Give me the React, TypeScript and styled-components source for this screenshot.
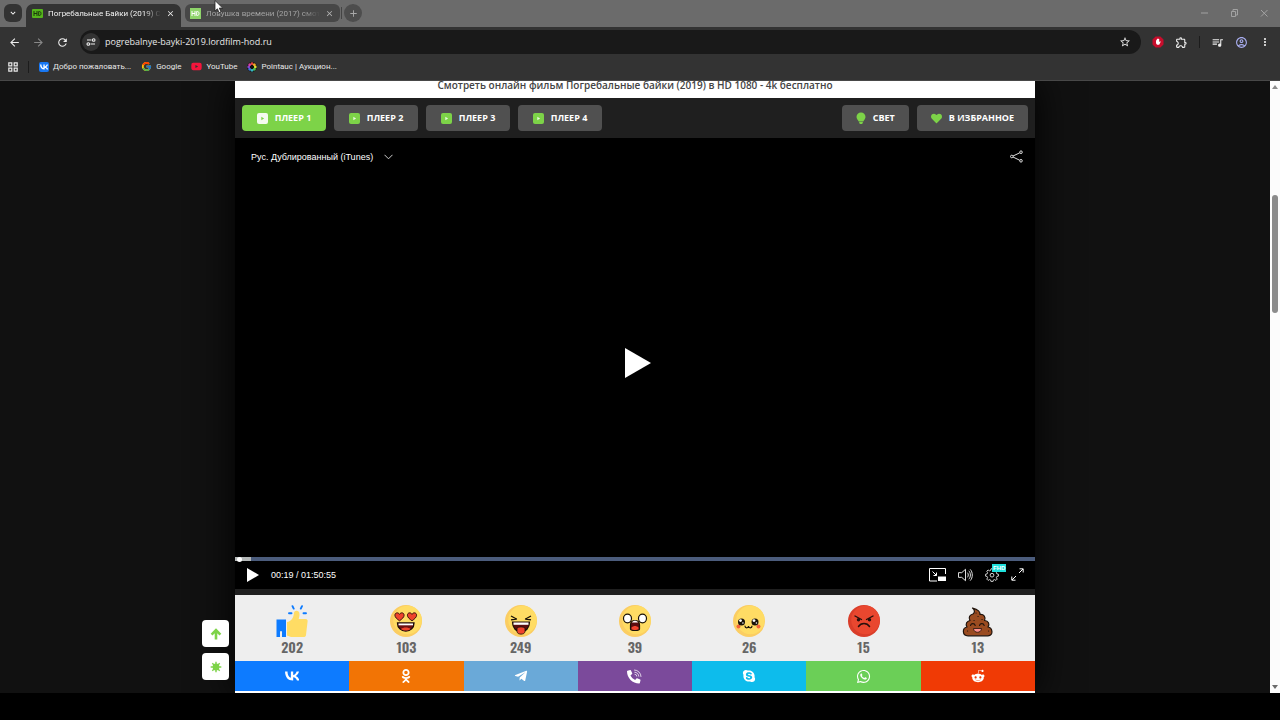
import React from "react";
import styled, { createGlobalStyle, css } from "styled-components";
import {
  MdArrowBack, MdArrowForward, MdRefresh, MdStarBorder, MdOutlineExtension, MdOutlineQueueMusic,
  MdMoreVert, MdClose, MdAdd, MdExpandMore, MdOutlineAccountCircle,
} from "react-icons/md";
import { FcGoogle } from "react-icons/fc";
import { FaOdnoklassniki, FaTelegramPlane, FaSkype, FaWhatsapp, FaRedditAlien, FaHeart, FaYoutube } from "react-icons/fa";

const ui = `"Open Sans", "Noto Sans", sans-serif`;
const compact = `Roboto, "Open Sans", sans-serif`;
const green = "#7dd348";

const Global = createGlobalStyle`
  *, *::before, *::after { box-sizing: border-box; }
  html, body, #root { height: 100%; }
  body { margin: 0; background: #000; font-family: ${ui}; overflow: hidden; }
  button, input { font: inherit; color: inherit; }
  button { border: 0; padding: 0; background: none; cursor: pointer; }
  a { color: inherit; text-decoration: none; }
  svg { display: block; flex: none; }
`;

const Screen = styled.div`
  display: flex;
  flex-direction: column;
  min-height: 100%;
  padding-bottom: 27px;
  position: relative;
`;

const Strip = styled.div`
  display: flex;
  align-items: flex-end;
  height: 27px;
  padding: 0 10px 0 4px;
  background: #6b6b6b;
`;

const RoundButton = styled.button<{ $round?: boolean }>`
  display: grid;
  place-items: center;
  width: 18px;
  height: 18px;
  margin-bottom: 5px;
  border-radius: ${(p) => (p.$round ? "50%" : "6px")};
  background: ${(p) => (p.$round ? "#4d4d4d" : "#333")};
  color: ${(p) => (p.$round ? "#aaa" : "#fff")};
`;

const Tab = styled.div<{ $active?: boolean }>`
  display: flex;
  align-items: center;
  gap: 5px;
  width: 155px;
  height: 18px;
  margin: 0 0 5px 4px;
  padding: 1px 6px 0 5px;
  border-radius: 6px;
  background: #474747;
  color: #a3a3a3;
  ${(p) =>
    p.$active &&
    css`
      height: 23px;
      margin: 0 0 0 4px;
      padding: 0 6px 4px;
      border-radius: 7px 7px 0 0;
      background: #333;
      color: #f2f2f2;
    `}
`;

const TabTitle = styled.a`
  flex: 1;
  min-width: 0;
  overflow: hidden;
  white-space: nowrap;
  font: 8px/12px ${compact};
  mask-image: linear-gradient(90deg, #000 85%, transparent);
`;

const TabClose = styled.button<{ $active?: boolean }>`
  color: ${(p) => (p.$active ? "#eee" : "#b5b5b5")};
`;

const Divider = styled.span`
  width: 1px;
  height: 12px;
  background: #1c1c1c;
`;

const StripDivider = styled(Divider)`
  margin: 0 2px 8px 1px;
  background: #444;
`;

const WindowButtons = styled.div`
  display: flex;
  gap: 18px;
  margin: 0 0 8px auto;
  color: #a2a2a2;
`;

const Toolbar = styled.div`
  display: flex;
  align-items: center;
  gap: 11px;
  height: 30px;
  padding: 0 9px 0 8px;
  background: #333;
  color: #eee;
`;

const IconButton = styled.button<{ $dim?: boolean }>`
  color: ${(p) => (p.$dim ? "#888" : "inherit")};
`;

const Omnibox = styled.label`
  display: flex;
  align-items: center;
  flex: 1;
  gap: 5px;
  height: 24px;
  padding: 0 10px 0 2px;
  border-radius: 12px;
  background: #191919;
`;

const SiteInfo = styled.span`
  display: grid;
  place-items: center;
  width: 18px;
  height: 18px;
  border-radius: 50%;
  background: #333;
`;

const Address = styled.input`
  flex: 1;
  min-width: 0;
  border: 0;
  padding: 0;
  outline: 0;
  background: none;
  color: #e8e8e8;
  font: 9px/14px ${ui};
`;

const Extensions = styled.div`
  display: flex;
  align-items: center;
  gap: 11px;
`;

const Bookmarks = styled.nav`
  display: flex;
  align-items: center;
  gap: 10px;
  height: 24px;
  padding: 0 8px 4px;
  border-bottom: 1px solid #484848;
  background: #333;
  color: #e8e8e8;
  font: 8px/12px ${compact};
`;

const Bookmark = styled.a`
  display: flex;
  align-items: center;
  gap: 4px;
`;

const VkBadge = styled.span`
  display: grid;
  place-items: center;
  width: 10px;
  height: 10px;
  border-radius: 2px;
  background: #1877f2;
  color: #fff;
`;

const Viewport = styled.div`
  display: flex;
  flex: 1;
  background: #111;
`;

const Page = styled.div`
  display: grid;
  grid-template-columns: 1fr minmax(0, 800px) 1fr;
  flex: 1;
  overflow: hidden;
`;

const SideTools = styled.aside`
  display: flex;
  flex-direction: column;
  align-items: flex-end;
  justify-content: flex-end;
  gap: 6px;
  padding: 0 6px 13px 0;
`;

const SideButton = styled.button`
  display: grid;
  place-items: center;
  width: 27px;
  height: 27px;
  border-radius: 4px;
  background: #fff;
  color: ${green};
  position: relative;
  z-index: 1;
`;

const Column = styled.main`
  display: flex;
  flex-direction: column;
  background: #1f1f1f;
  box-shadow: 0 0 36px #000;
`;

const Heading = styled.h2`
  margin: 0;
  padding-bottom: 9px;
  background: #fff;
  color: #444;
  font: 600 10px/8px ${ui};
  text-align: center;
  white-space: nowrap;
`;

const PlayerTabs = styled.div`
  display: flex;
  gap: 8px;
  padding: 7px;
`;

const PlayerButton = styled.button<{ $active?: boolean; $push?: boolean }>`
  display: flex;
  align-items: center;
  justify-content: center;
  gap: 7px;
  height: 26px;
  padding: 0 14px;
  margin-left: ${(p) => (p.$push ? "auto" : "0")};
  border-radius: 4px;
  background: ${(p) => (p.$active ? green : "#505050")};
  color: #fff;
  font: 700 9px/14px ${ui};
  white-space: nowrap;
`;

const PlayerChoice = styled(PlayerButton)`
  min-width: 84px;
`;

const Video = styled.section`
  display: flex;
  flex-direction: column;
  flex: 1;
  background: #000;
  color: #fff;
  font: 9px/12px "Liberation Sans", Arial, sans-serif;
`;

const VideoHead = styled.div`
  display: flex;
  align-items: center;
  justify-content: space-between;
  padding: 12px 12px 0 16px;
`;

const Voice = styled.button`
  display: flex;
  align-items: center;
  gap: 11px;
`;

const BigPlay = styled.button`
  margin: auto;
  padding: 5px 0 0 5px;
`;

const Seek = styled.input`
  appearance: none;
  display: block;
  width: 100%;
  height: 4px;
  margin: 0;
  background: linear-gradient(90deg, #b4b8b8 2%, #4b5c7c 2%);
  &::-webkit-slider-thumb {
    appearance: none;
    width: 5px;
    height: 5px;
    border-radius: 50%;
    background: #fff;
  }
`;

const Controls = styled.div`
  display: flex;
  align-items: center;
  gap: 12px;
  height: 28px;
  padding: 0 11px 1px 12px;
`;

const Time = styled.span`
  margin-right: auto;
`;

const Gear = styled.button`
  position: relative;
`;

const Pro = styled.span`
  position: absolute;
  left: 7px;
  top: -4px;
  padding: 0 1px;
  background: #1fe0dc;
  color: #fff;
  font: 700 6px/8px "Liberation Sans", Arial, sans-serif;
`;

const Reactions = styled.div`
  display: grid;
  grid-template-columns: repeat(7, 1fr);
  height: 66px;
  margin-top: 6px;
  padding-top: 10px;
  background: #eee;
`;

const Reaction = styled.button`
  display: flex;
  flex-direction: column;
  align-items: center;
  gap: 2px;
  color: #666;
  font: 600 14px/16px Oswald, "Roboto Condensed", "DejaVu Sans Condensed", sans-serif;
`;

const Shares = styled.div`
  display: grid;
  grid-template-columns: repeat(7, 1fr);
  border-bottom: 2px solid #fff;
`;

const Share = styled.a<{ $bg: string }>`
  display: grid;
  place-items: center;
  height: 30px;
  background: ${(p) => p.$bg};
  color: #fff;
`;

const Scrollbar = styled.div`
  display: flex;
  flex-direction: column;
  align-items: center;
  width: 10px;
  padding: 4px 0;
  background: #fcfcfc;
`;

const Thumb = styled.div`
  width: 6px;
  flex: 118;
  border-radius: 3px;
  background: #8b8b8b;
`;

const Space = styled.div<{ $grow: number }>`
  flex: ${(p) => p.$grow};
`;

const Pointer = styled.svg`
  position: absolute;
  left: 214px;
  top: 0;
`;

const VkMark = ({ w, h }: { w: number; h: number }) => (
  <svg width={w} height={h} viewBox="8 14 31 21" fill="currentColor">
    <path d="M25.540 34.580c-10.940 0-17.180-7.500-17.440-19.980h5.480c.18 9.160 4.220 13.040 7.420 13.840V14.600h5.160v7.900c3.160-.34 6.480-3.940 7.600-7.900h5.160c-.86 4.880-4.460 8.480-7.020 9.960 2.560 1.200 6.660 4.340 8.220 10.020h-5.680c-1.220-3.800-4.260-6.740-8.280-7.140v7.140z" />
  </svg>
);

const ViberPhone = () => (
  <svg width="15" height="15" viewBox="0 0 15 15">
    <path
      transform="translate(0 1) scale(.0264)"
      fill="#fff"
      d="M497.390 361.800l-112-48a24 24 0 0 0-28 6.900l-49.600 60.600A370.660 370.660 0 0 1 130.600 204.110l60.600-49.600a23.940 23.940 0 0 0 6.900-28l-48-112A24.160 24.160 0 0 0 122.600.61l-104 24A24 24 0 0 0 0 48c0 256.500 207.900 464 464 464a24 24 0 0 0 23.400-18.600l24-104a24.290 24.290 0 0 0-14.010-27.600z"
    />
    <path d="M7.500 1a6.500 6.500 0 0 1 6.500 6.500M7.800 3.200a4 4 0 0 1 4 4M8 5.300a1.800 1.800 0 0 1 1.800 1.800" fill="none" stroke="#fff" strokeOpacity=".75" strokeLinecap="round" />
  </svg>
);

const HdIcon = ({ pale }: { pale?: boolean }) => (
  <svg width="11" height="11" viewBox="0 0 11 11">
    {pale ? <rect width="11" height="11" fill="#8ed46a" /> : <rect y="1" width="11" height="9" rx="1" fill="#55b41c" />}
    <path d="M2 3v5M5 3v5M2 5.500h3M6.700 3.500v4h.8c2 0 2-4 0-4z" fill="none" stroke={pale ? "#fff" : "#183808"} strokeWidth="1" />
  </svg>
);

const PlayBadge = ({ active }: { active?: boolean }) => (
  <svg width="11" height="11" viewBox="0 0 11 11">
    <rect width="11" height="11" rx="2" fill={active ? "#f4fbef" : green} />
    <path d="M4.300 3.800v3.400l2.800-1.700z" fill={active ? green : "#e8f8dc"} />
  </svg>
);

const Bulb = () => (
  <svg width="10" height="12" viewBox="0 0 10 12">
    <path d="M5 .5a4.500 4.500 0 0 0-4.500 4.500c0 2 1.700 3.100 2.200 4.600h4.600c.5-1.500 2.200-2.600 2.200-4.600A4.500 4.500 0 0 0 5 .5zM3.200 10h3.600v1L6 11.900H4L3.200 11z" fill={green} />
  </svg>
);

const Thumbs = () => (
  <svg width="32" height="32" viewBox="0 0 32 32">
    <path d="M.5 14.500h9.500V32H6v-5a1 1 0 0 0-2 0v5H.5z" fill="#0d7bff" />
    <path d="M11 17c4-.5 6.500-4 7-9 .3-3 5.500-3 5.500 1 0 2-.3 3.500-.8 5h6.800c2 0 2.500 1.500 2 3l-1.500 13c-.2 1.500-1 2-2.500 2H15l-4-1.500z" fill="#ffdc64" />
    <path d="M16.500 1.200l1.200 2.400M26 1.200l-1.200 2.400M13 8.300h2.500M27.500 8.300H30" stroke="#0d7bff" strokeWidth="1.900" strokeLinecap="round" />
  </svg>
);

const Face = ({ red, children }: { red?: boolean; children: React.ReactNode }) => (
  <svg width="32" height="32" viewBox="0 0 32 32">
    <circle cx="16" cy="16" r="16" fill={red ? "#d93d29" : "#fbcd62"} />
    <circle cx="17.500" cy="15" r="14.300" fill={red ? "#e9472f" : "#ffdc64"} />
    {children}
  </svg>
);

const heart = "M0 3.800C-2.500 2-4.600.3-4.600-1.800c0-2.700 3.400-3.200 4.600-.8 1.200-2.400 4.600-1.900 4.600.8C4.600.3 2.500 2 0 3.800z";

const Love = () => (
  <Face>
    {[9.500, 22].map((x) => (
      <path key={x} d={heart} transform={`translate(${x} 12)`} fill="#f0432c" stroke="#3a160e" />
    ))}
    <path d="M7.500 18h16.500c0 5-3.500 8-8.200 8s-8.300-3-8.300-8z" fill="#6d0f12" stroke="#1c0a08" strokeWidth="1.300" />
    <path d="M8.500 18.500h14.500v1.800H8.500z" fill="#fff" />
    <path d="M11 24c2-2 7.500-2 9.500 0-2.500 2-7 2-9.500 0z" fill="#f0432c" />
  </Face>
);

const Laugh = () => (
  <Face>
    <path d="M6 11l5.500 3L6 14.800M26 11l-5.500 3 5.500.8" fill="none" stroke="#1a1208" strokeWidth="1.300" strokeLinejoin="round" />
    <path d="M7.500 17h17c0 6-4 10-8.500 10s-8.500-4-8.500-10z" fill="#5c0d10" stroke="#1a1208" strokeWidth="1.200" />
    <path d="M8.500 17.500h15v2.300h-15z" fill="#fff" />
    <path d="M12 23c1.500-1.500 6.500-1.500 8 0v3.500c0 3.500-8 3.500-8 0z" fill="#f0432c" stroke="#1a1208" strokeWidth=".8" />
  </Face>
);

const Shock = () => (
  <Face>
    <ellipse cx="8.500" cy="13.500" rx="4" ry="4.300" fill="#fff" stroke="#1a1208" strokeWidth="1.200" />
    <ellipse cx="23.500" cy="13.500" rx="4" ry="4.300" fill="#fff" stroke="#1a1208" strokeWidth="1.200" />
    <path d="M11.500 20c0-6 9-6 9 0v4c0 2-9 2-9 0z" fill="#5c0d10" stroke="#1a1208" strokeWidth="1.200" />
    <path d="M13 17.500c1-2.300 5-2.300 6 0z" fill="#fff" />
    <path d="M12.500 22.500c2-2 5-2 7 0v1.700c-1.500 1-5.500 1-7 0z" fill="#f0432c" />
  </Face>
);

const Cute = () => (
  <Face>
    <circle cx="5.500" cy="21.500" r="2" fill="#f4643c" />
    <circle cx="25.500" cy="21.500" r="2" fill="#f4643c" />
    {[8.500, 22].map((x) => (
      <g key={x}>
        <circle cx={x} cy="17" r="3.500" fill="#1a1208" />
        <circle cx={x - 1} cy="15.600" r="1.400" fill="#fff" />
        <circle cx={x + 1.400} cy="18" r=".8" fill="#fff" />
      </g>
    ))}
    <path d="M12 21c0 2.500 3.500 2.500 3.500 0 0 2.500 3.500 2.500 3.500 0" fill="none" stroke="#1a1208" strokeWidth="1.200" strokeLinecap="round" />
  </Face>
);

const Angry = () => (
  <Face red>
    <path d="M7 11l6.500 3.500M25 11l-6.500 3.500" stroke="#26100c" strokeWidth="1.400" strokeLinecap="round" />
    <circle cx="10.500" cy="14.800" r="1.700" fill="#26100c" />
    <circle cx="21.500" cy="14.800" r="1.700" fill="#26100c" />
    <path d="M10.500 21.500c2.500-4 8.500-4 11 0" fill="none" stroke="#26100c" strokeWidth="1.500" strokeLinecap="round" />
  </Face>
);

const Poop = () => (
  <svg width="32" height="32" viewBox="0 0 32 32">
    <path d="M10.500 3c3.500 1 8 3 7.500 6.500 4-.5 6 3 4.500 6 4 0 5.500 4 3.500 6.500 4.500.5 6 8.800 0 8.800H6c-6 0-6-7.800-1-8.800-2-3 0-6 3-6.500-2-3 0-6 3-6.500 2-1.500 2-4-.5-6z" fill="#9a4b20" stroke="#1f130c" strokeWidth="1.200" strokeLinejoin="round" />
    <path d="M8.500 20.500c.7-2.500 4-2.500 4.700 0M17.500 20.500c.7-2.500 4-2.500 4.700 0" fill="none" stroke="#1f130c" strokeWidth="1.100" strokeLinecap="round" />
    <path d="M16 11.500h.1M12 15.500h.1M20 14.500h.1M5.500 26h.1M26.500 26h.1M14 8h.1" stroke="#1f130c" strokeWidth="1.200" strokeLinecap="round" />
    <path d="M11.500 23.500h8c0 5-8 5-8 0z" fill="#ff8f8b" stroke="#1f130c" strokeWidth=".8" />
  </svg>
);

const Triangle = ({ w, h }: { w: number; h: number }) => (
  <svg width={w} height={h} viewBox="0 0 26 30" preserveAspectRatio="none">
    <path d="M0 0l26 15L0 30z" fill="#fff" />
  </svg>
);

const gearTeeth = "M6 .8h2l.4 1.700 1.300.5 1.500-.9 1.400 1.400-.9 1.500.5 1.300 1.700.4v2l-1.700.4-.5 1.300.9 1.500-1.400 1.400-1.500-.9-1.300.5L8 14.600H6l-.4-1.700-1.300-.5-1.500.9-1.400-1.400.9-1.500-.5-1.300L.1 8.700v-2l1.700-.4L2.300 5l-.9-1.500 1.400-1.400 1.500.9 1.300-.5z";

const reactions = [
  { name: "Нравится", icon: <Thumbs />, count: 202 },
  { name: "Восторг", icon: <Love />, count: 103 },
  { name: "Смешно", icon: <Laugh />, count: 249 },
  { name: "Шок", icon: <Shock />, count: 39 },
  { name: "Мило", icon: <Cute />, count: 26 },
  { name: "Злость", icon: <Angry />, count: 15 },
  { name: "Плохо", icon: <Poop />, count: 13 },
];

const shares = [
  { name: "ВКонтакте", bg: "#0d7bff", icon: <VkMark w={14} h={10} /> },
  { name: "Одноклассники", bg: "#f27405", icon: <FaOdnoklassniki size={14} /> },
  { name: "Telegram", bg: "#6aa9d8", icon: <FaTelegramPlane size={14} /> },
  { name: "Viber", bg: "#7b4a9b", icon: <ViberPhone /> },
  { name: "Skype", bg: "#0dbcec", icon: <FaSkype size={14} /> },
  { name: "WhatsApp", bg: "#6bcf57", icon: <FaWhatsapp size={15} /> },
  { name: "Reddit", bg: "#f03a05", icon: <FaRedditAlien size={14} /> },
];

const wheel = ["#e8463c", "#f5a623", "#e5dc35", "#4fc04c", "#35b8c4", "#3c78e0", "#8848d0", "#d840a0"];

export default function App() {
  return (
    <Screen>
      <Global />
      <Strip>
        <RoundButton aria-label="Поиск вкладок"><MdExpandMore size={10} /></RoundButton>
        <Tab $active>
          <HdIcon />
          <TabTitle href="#one">Погребальные Байки (2019) С</TabTitle>
          <TabClose $active aria-label="Закрыть вкладку"><MdClose size={9} /></TabClose>
        </Tab>
        <Tab>
          <HdIcon pale />
          <TabTitle href="#two">Ловушка времени (2017) смот</TabTitle>
          <TabClose aria-label="Закрыть вкладку"><MdClose size={9} /></TabClose>
        </Tab>
        <StripDivider />
        <RoundButton $round aria-label="Новая вкладка"><MdAdd size={11} /></RoundButton>
        <WindowButtons>
          <IconButton aria-label="Свернуть">
            <svg width="12" height="12" viewBox="0 0 12 12"><path d="M3 6h7" stroke="currentColor" /></svg>
          </IconButton>
          <IconButton aria-label="Развернуть">
            <svg width="12" height="12" viewBox="0 0 12 12"><path d="M3.500 4.500h4v5h-4zM5 4.500v-2h4.500v5.500h-2" fill="none" stroke="currentColor" /></svg>
          </IconButton>
          <IconButton aria-label="Закрыть">
            <svg width="12" height="12" viewBox="0 0 12 12"><path d="M3 3l6.500 6.500M9.500 3L3 9.500" stroke="currentColor" /></svg>
          </IconButton>
        </WindowButtons>
      </Strip>

      <Toolbar>
        <IconButton aria-label="Назад"><MdArrowBack size={13} /></IconButton>
        <IconButton $dim aria-label="Вперёд"><MdArrowForward size={13} /></IconButton>
        <IconButton aria-label="Обновить"><MdRefresh size={13} /></IconButton>
        <Omnibox>
          <SiteInfo>
            <svg width="10" height="10" viewBox="0 0 10 10" fill="none" stroke="#eee" strokeWidth="1.100">
              <path d="M5.500 3H1M4.500 7H9" />
              <circle cx="7.700" cy="3" r="1.300" />
              <circle cx="2.300" cy="7" r="1.300" />
            </svg>
          </SiteInfo>
          <Address aria-label="Адрес" defaultValue="pogrebalnye-bayki-2019.lordfilm-hod.ru" />
          <IconButton aria-label="В закладки"><MdStarBorder size={12} /></IconButton>
        </Omnibox>
        <Extensions>
          <IconButton aria-label="Блокировщик">
            <svg width="12" height="12" viewBox="0 0 12 12">
              <path d="M3.600.5h4.800l3.100 3.100v4.800l-3.100 3.100H3.600L.5 8.400V3.600z" fill="#c70d2c" />
              <path d="M4 4.200h.8V3h.8v-.6h.8V3h.8v3l1-.8.5.5-1.500 3H5L4 7.200z" fill="#fff" />
            </svg>
          </IconButton>
          <IconButton aria-label="Расширения"><MdOutlineExtension size={13} /></IconButton>
          <Divider />
          <IconButton aria-label="Медиа"><MdOutlineQueueMusic size={13} /></IconButton>
          <IconButton aria-label="Профиль"><MdOutlineAccountCircle size={13} color="#a9aef0" /></IconButton>
          <IconButton aria-label="Меню"><MdMoreVert size={12} /></IconButton>
        </Extensions>
      </Toolbar>

      <Bookmarks>
        <IconButton aria-label="Приложения">
          <svg width="10" height="10" viewBox="0 0 10 10" fill="none" stroke="#e8e8e8" strokeWidth="1.200">
            <path d="M.8.8h3v3h-3zM6.200.8h3v3h-3zM.8 6.200h3v3h-3zM6.200 6.200h3v3h-3z" />
          </svg>
        </IconButton>
        <Divider />
        <Bookmark href="#vk"><VkBadge><VkMark w={8} h={6} /></VkBadge>Добро пожаловать...</Bookmark>
        <Bookmark href="#google"><FcGoogle size={11} />Google</Bookmark>
        <Bookmark href="#youtube"><FaYoutube size={11} color="#f5153c" />YouTube</Bookmark>
        <Bookmark href="#pointauc">
          <svg width="10" height="10" viewBox="0 0 10 10">
            <circle cx="5" cy="5" r="5" fill="#111" />
            {wheel.map((c, i) => (
              <circle key={c} cx="5" cy="1.700" r="1.400" fill={c} transform={`rotate(${i * 45} 5 5)`} />
            ))}
          </svg>
          Pointauc | Аукцион...
        </Bookmark>
      </Bookmarks>

      <Viewport>
        <Page>
          <SideTools>
            <SideButton aria-label="Наверх">
              <svg width="12" height="12" viewBox="0 0 12 12"><path d="M6 11.500V2.500M1.600 6.600L6 2.200l4.400 4.400" fill="none" stroke="currentColor" strokeWidth="2.600" /></svg>
            </SideButton>
            <SideButton aria-label="Тема">
              <svg width="12" height="12" viewBox="0 0 12 12">
                <circle cx="6" cy="6" r="3.400" fill="currentColor" />
                <path d="M6 .7v10.600M.7 6h10.600M2.300 2.300l7.400 7.400M9.700 2.300l-7.400 7.400" stroke="currentColor" strokeWidth="1.400" />
              </svg>
            </SideButton>
          </SideTools>
          <Column>
            <Heading>Смотреть онлайн фильм Погребальные байки (2019) в HD 1080 - 4k бесплатно</Heading>
            <PlayerTabs>
              {[1, 2, 3, 4].map((n) => (
                <PlayerChoice key={n} $active={n === 1}><PlayBadge active={n === 1} />ПЛЕЕР {n}</PlayerChoice>
              ))}
              <PlayerButton $push><Bulb />СВЕТ</PlayerButton>
              <PlayerButton><FaHeart size={11} color={green} />В ИЗБРАННОЕ</PlayerButton>
            </PlayerTabs>
            <Video>
              <VideoHead>
                <Voice>
                  Рус. Дублированный (iTunes)
                  <svg width="9" height="6" viewBox="0 0 9 6"><path d="M.5.8l4 4 4-4" fill="none" stroke="#ccc" /></svg>
                </Voice>
                <IconButton aria-label="Поделиться">
                  <svg width="13" height="13" viewBox="0 0 13 13" fill="none" stroke="#ddd">
                    <circle cx="1.800" cy="6.500" r="1.300" />
                    <circle cx="11" cy="2.200" r="1.300" />
                    <circle cx="11" cy="10.800" r="1.300" />
                    <path d="M3 6l6.800-3.200M3 7l6.800 3.300" />
                  </svg>
                </IconButton>
              </VideoHead>
              <BigPlay aria-label="Смотреть"><Triangle w={26} h={30} /></BigPlay>
              <Seek type="range" aria-label="Позиция" min={0} max={6655} defaultValue={19} />
              <Controls>
                <IconButton aria-label="Воспроизвести"><Triangle w={12} h={14} /></IconButton>
                <Time>00:19 / 01:50:55</Time>
                <IconButton aria-label="Картинка в картинке">
                  <svg width="17" height="14" viewBox="0 0 17 14" fill="none" stroke="#fff">
                    <path d="M16.500 6V.5H.5v12.500H8M3.500 3.500l4 4M7.500 4.500v3h-3" />
                    <path d="M9 8.500h8V13H9z" fill="#fff" stroke="none" />
                  </svg>
                </IconButton>
                <IconButton aria-label="Громкость">
                  <svg width="15" height="14" viewBox="0 0 16 14" fill="none" stroke="#eee">
                    <path d="M.5 4.500H4L8 .9v12.200L4 9.500H.5zM10 4.500c1.300 1.300 1.300 3.700 0 5M11.500 2.500c2.300 2.300 2.300 6.700 0 9M13 1c3 3 3 9 0 12" />
                  </svg>
                </IconButton>
                <Gear aria-label="Настройки">
                  <svg width="14" height="14" viewBox="0 0 14 15" fill="none" stroke="#ddd">
                    <path d={gearTeeth} />
                    <circle cx="7" cy="7.700" r="2" />
                  </svg>
                  <Pro>FHD</Pro>
                </Gear>
                <IconButton aria-label="На весь экран">
                  <svg width="13" height="13" viewBox="0 0 13 13" fill="none" stroke="#fff">
                    <path d="M8.500.8h3.700v3.700M12 1L8 5M4.500 12.200H.8V8.500M1 12l4-4" />
                  </svg>
                </IconButton>
              </Controls>
            </Video>
            <Reactions>
              {reactions.map((r) => (
                <Reaction key={r.name} aria-label={r.name}>{r.icon}<span>{r.count}</span></Reaction>
              ))}
            </Reactions>
            <Shares>
              {shares.map((s) => (
                <Share key={s.name} href="#share" aria-label={s.name} $bg={s.bg}>{s.icon}</Share>
              ))}
            </Shares>
          </Column>
        </Page>
        <Scrollbar>
          <svg width="6" height="4" viewBox="0 0 6 4"><path d="M0 4l3-4 3 4z" fill="#8b8b8b" /></svg>
          <Space $grow={106} />
          <Thumb />
          <Space $grow={372} />
          <svg width="6" height="4" viewBox="0 0 6 4"><path d="M0 0l3 4 3-4z" fill="#6b6b6b" /></svg>
        </Scrollbar>
      </Viewport>
      <Pointer width="10" height="14" viewBox="0 0 10 14">
        <path d="M1 .5v10.500l2.400-2.200 1.700 3.900 1.900-.8-1.700-3.800h3.400z" fill="#fff" stroke="#222" strokeWidth=".8" />
      </Pointer>
    </Screen>
  );
}
